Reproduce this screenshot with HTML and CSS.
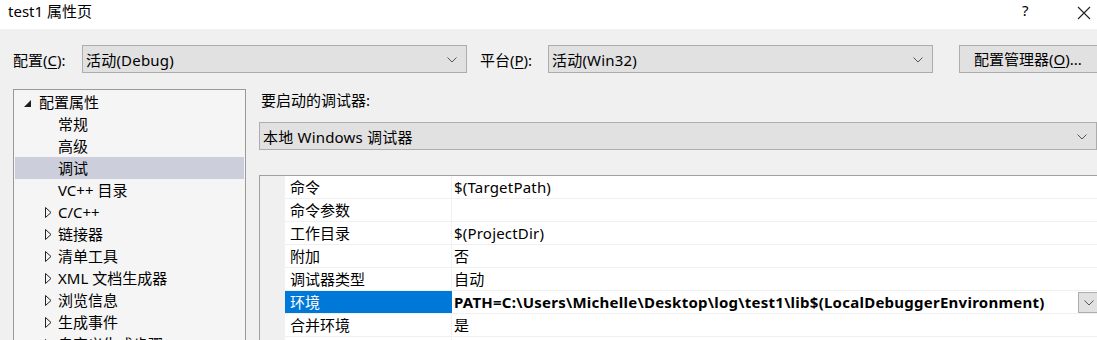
FILE: index.html
```html
<!DOCTYPE html>
<html lang="zh-CN">
<head>
    <meta charset="UTF-8">
    <title>test1 属性页</title>
    <link rel="stylesheet" href="styles.css">
</head>
<body>
    <div class="titlebar">
        <span class="title">test1 属性页</span>
        <span class="help">?</span>
        <span class="close">
            <svg width="14" height="14" viewBox="0 0 14 14"><path d="M1 1 L13 13 M13 1 L1 13" stroke="#222" stroke-width="1.1" fill="none"/></svg>
        </span>
    </div>

    <div class="dialog">
        <div class="toolbar">
            <span class="label label-config">配置(<u>C</u>):</span>
            <div class="combo combo-config">
                <span>活动(Debug)</span>
                <svg class="chev" width="10" height="6" viewBox="0 0 10 6"><path d="M0.5 0.5 L5 5 L9.5 0.5" stroke="#555" fill="none"/></svg>
            </div>
            <span class="label label-platform">平台(<u>P</u>):</span>
            <div class="combo combo-platform">
                <span>活动(Win32)</span>
                <svg class="chev" width="10" height="6" viewBox="0 0 10 6"><path d="M0.5 0.5 L5 5 L9.5 0.5" stroke="#555" fill="none"/></svg>
            </div>
            <div class="button">配置管理器(<u>O</u>)...</div>
        </div>

        <div class="content">
            <div class="tree">
                <div class="node root"><span class="tri-open"></span>配置属性</div>
                <div class="node leaf">常规</div>
                <div class="node leaf">高级</div>
                <div class="node leaf selected">调试</div>
                <div class="node leaf">VC++ 目录</div>
                <div class="node"><svg class="tri" width="7" height="11" viewBox="0 0 7 11"><path d="M0.5 0.5 L6 5.5 L0.5 10.5 Z" stroke="#222" fill="none"/></svg>C/C++</div>
                <div class="node"><svg class="tri" width="7" height="11" viewBox="0 0 7 11"><path d="M0.5 0.5 L6 5.5 L0.5 10.5 Z" stroke="#222" fill="none"/></svg>链接器</div>
                <div class="node"><svg class="tri" width="7" height="11" viewBox="0 0 7 11"><path d="M0.5 0.5 L6 5.5 L0.5 10.5 Z" stroke="#222" fill="none"/></svg>清单工具</div>
                <div class="node"><svg class="tri" width="7" height="11" viewBox="0 0 7 11"><path d="M0.5 0.5 L6 5.5 L0.5 10.5 Z" stroke="#222" fill="none"/></svg>XML 文档生成器</div>
                <div class="node"><svg class="tri" width="7" height="11" viewBox="0 0 7 11"><path d="M0.5 0.5 L6 5.5 L0.5 10.5 Z" stroke="#222" fill="none"/></svg>浏览信息</div>
                <div class="node"><svg class="tri" width="7" height="11" viewBox="0 0 7 11"><path d="M0.5 0.5 L6 5.5 L0.5 10.5 Z" stroke="#222" fill="none"/></svg>生成事件</div>
                <div class="node"><svg class="tri" width="7" height="11" viewBox="0 0 7 11"><path d="M0.5 0.5 L6 5.5 L0.5 10.5 Z" stroke="#222" fill="none"/></svg>自定义生成步骤</div>
            </div>

            <div class="pane">
                <div class="pane-label">要启动的调试器:</div>
                <div class="combo combo-debugger">
                    <span>本地 Windows 调试器</span>
                    <svg class="chev" width="10" height="6" viewBox="0 0 10 6"><path d="M0.5 0.5 L5 5 L9.5 0.5" stroke="#555" fill="none"/></svg>
                </div>

                <div class="grid">
                    <div class="row"><div class="gutter"></div><div class="name">命令</div><div class="value">$(TargetPath)</div></div>
                    <div class="row"><div class="gutter"></div><div class="name">命令参数</div><div class="value"></div></div>
                    <div class="row"><div class="gutter"></div><div class="name">工作目录</div><div class="value">$(ProjectDir)</div></div>
                    <div class="row"><div class="gutter"></div><div class="name">附加</div><div class="value">否</div></div>
                    <div class="row"><div class="gutter"></div><div class="name">调试器类型</div><div class="value">自动</div></div>
                    <div class="row active">
                        <div class="gutter"></div>
                        <div class="name">环境</div>
                        <div class="value bold">PATH=C:\Users\Michelle\Desktop\log\test1\lib$(LocalDebuggerEnvironment)</div>
                        <div class="drop">
                            <svg width="10" height="6" viewBox="0 0 10 6"><path d="M0.5 0.5 L5 5 L9.5 0.5" stroke="#555" fill="none"/></svg>
                        </div>
                    </div>
                    <div class="row"><div class="gutter"></div><div class="name">合并环境</div><div class="value">是</div></div>
                    <div class="row"><div class="gutter"></div><div class="name"></div><div class="value"></div></div>
                </div>
            </div>
        </div>
    </div>
</body>
</html>
```

FILE: styles.css
```css
* {
    margin: 0;
    padding: 0;
    box-sizing: border-box;
}

body {
    font-family: "Noto Sans", "Noto Sans CJK SC", sans-serif;
    font-size: 15px;
    color: #000;
    background: #f0f0f0;
    width: 1097px;
    height: 340px;
    overflow: hidden;
}

u {
    text-decoration: underline;
    text-underline-offset: 2px;
}

/* title bar */
.titlebar {
    height: 29px;
    background: #fff;
    display: flex;
    align-items: center;
    position: relative;
}

.title {
    font-size: 15px;
    margin-left: 8px;
    margin-top: -8px;
}

.help {
    position: absolute;
    left: 1022px;
    top: 0;
    font-size: 15px;
}

.close {
    position: absolute;
    left: 1077px;
    top: 4px;
}

/* toolbar */
.toolbar {
    display: flex;
    align-items: center;
    padding: 16px 0 0 13px;
    height: 44px;
}

.label {
    flex-shrink: 0;
}

.label-config {
    width: 69px;
}

.label-platform {
    margin-left: 13px;
    width: 68px;
}

.combo {
    flex-shrink: 0;
    height: 28px;
    background: #e1e1e1;
    border: 1px solid #adadad;
    display: flex;
    align-items: center;
    justify-content: space-between;
    padding: 0 9px 0 3px;
    letter-spacing: 0.2px;
}

.combo-config,
.combo-platform {
    width: 385px;
}

.chev {
    margin-top: 1px;
}

.button {
    margin-left: 26px;
    width: 150px;
    height: 28px;
    flex-shrink: 0;
    background: #e1e1e1;
    border: 1px solid #adadad;
    padding-left: 14px;
    line-height: 26px;
}

/* body */
.content {
    display: flex;
    gap: 13px;
    padding: 16px 0 0 13px;
}

.tree {
    flex-shrink: 0;
    width: 233px;
    height: 300px;
    background: #f5f5f5;
    border: 1px solid #999;
    padding: 1px 1px 0;
    overflow: hidden;
}

.node {
    height: 22px;
    line-height: 22px;
    padding-left: 30px;
    display: flex;
    align-items: center;
    white-space: nowrap;
}

.root {
    padding-left: 9px;
}

.leaf {
    padding-left: 43px;
}

.selected {
    background: #cccedb;
}

.tri-open {
    width: 0;
    height: 0;
    border-left: 7px solid transparent;
    border-bottom: 7px solid #1e1e1e;
    margin: 2px 8px 0 0;
}

.tri {
    margin-right: 6px;
}

.pane {
    flex: 1;
}

.pane-label {
    height: 33px;
    line-height: 22px;
    padding-left: 2px;
}

.combo-debugger {
    width: 838px;
    height: 28px;
    padding-left: 3px;
}

.grid {
    margin-top: 25px;
    border-top: 1px solid #a0a0a0;
    border-left: 1px solid #a0a0a0;
    background: #fff;
    width: 840px;
}

.row {
    display: flex;
    height: 23px;
    border-bottom: 1px solid #f0f0f0;
    position: relative;
}

.gutter {
    width: 25px;
    background: #f0f0f0;
    margin-bottom: -1px;
}

.name {
    width: 167px;
    padding-left: 5px;
    line-height: 22px;
    border-right: 1px solid #f0f0f0;
}

.value {
    flex: 1;
    padding-left: 2px;
    line-height: 22px;
    white-space: nowrap;
    letter-spacing: 0.2px;
}

.bold {
    font-weight: bold;
    letter-spacing: 0.25px;
}

.active .name {
    background: #0078d7;
    color: #fff;
    border-right-color: #0078d7;
}

.drop {
    position: absolute;
    right: 0;
    top: 1px;
    width: 21px;
    height: 21px;
    background: #e1e1e1;
    border: 1px solid #adadad;
    display: flex;
    align-items: center;
    justify-content: center;
}
```
